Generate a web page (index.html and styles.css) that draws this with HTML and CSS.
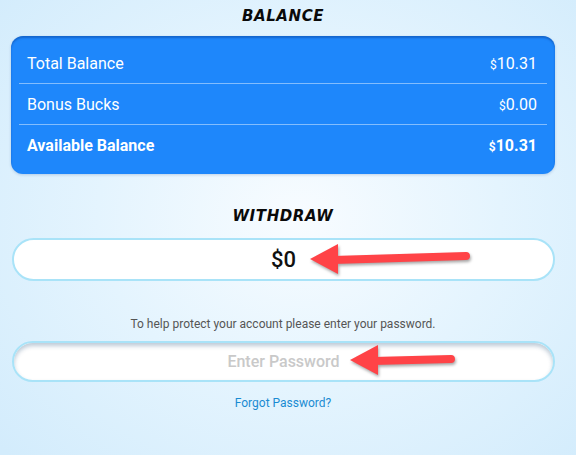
FILE: index.html
```html
<!DOCTYPE html>
<html>
<head>
<meta charset="utf-8">
<link rel="stylesheet" href="styles.css">
</head>
<body>
<main class="page">
  <h2 class="title">BALANCE</h2>
  <section class="card">
    <div class="row"><span>Total Balance</span><span class="amt"><small>$</small>10.31</span></div>
    <div class="row"><span>Bonus Bucks</span><span class="amt"><small>$</small>0.00</span></div>
    <div class="row bold"><span>Available Balance</span><span class="amt"><small>$</small>10.31</span></div>
  </section>

  <h2 class="title title-w">WITHDRAW</h2>
  <div class="field">
    <div class="input amount">$0</div>
    <svg class="arrow" width="544" height="42" viewBox="0 0 544 42">
      <line x1="322" y1="22" x2="455" y2="18" stroke="#ff4347" stroke-width="8" stroke-linecap="round"/>
      <polygon points="299,21 327,6 327,36" fill="#ff4347"/>
    </svg>
  </div>

  <p class="help">To help protect your account please enter your password.</p>
  <div class="field">
    <div class="input password">Enter Password</div>
    <svg class="arrow" width="544" height="40" viewBox="0 0 544 40">
      <line x1="362" y1="20" x2="440" y2="18" stroke="#ff4347" stroke-width="8" stroke-linecap="round"/>
      <polygon points="339,19 367,4 367,34" fill="#ff4347"/>
    </svg>
  </div>
  <a class="forgot" href="#">Forgot Password?</a>
</main>
</body>
</html>
```
FILE: styles.css
```css
html, body {
  margin: 0;
  padding: 0;
  height: 100%;
}
body {
  background: radial-gradient(ellipse 70% 75% at 52% 48%, #f8fcff 0%, #e4f4fe 50%, #d3ecfc 100%);
  font-family: Roboto, "Liberation Sans", sans-serif;
  overflow: hidden;
}
.page {
  width: 544px;
  margin-left: 11px;
  display: flex;
  flex-direction: column;
}
.title {
  margin: 0;
  height: 36px;
  line-height: 32px;
  text-align: center;
  font-family: "DejaVu Sans", sans-serif;
  font-weight: bold;
  font-style: italic;
  font-size: 15px;
  letter-spacing: 0.6px;
  color: #0a0a0a;
}
.title-w {
  margin-top: 26px;
  height: 38px;
  line-height: 33px;
}
.card {
  background: #1e87fb;
  border-radius: 12px;
  padding: 7px 8px 8px;
  height: 123px;
  box-shadow: inset 0 2px 2px rgba(0, 40, 120, 0.35), 0 1px 3px rgba(0, 60, 140, 0.2);
  display: flex;
  flex-direction: column;
}
.row {
  height: 41px;
  display: flex;
  align-items: center;
  justify-content: space-between;
  padding: 0 10px 0 8px;
  color: #fff;
  font-size: 16px;
  border-bottom: 1px solid rgba(255, 255, 255, 0.45);
  box-sizing: border-box;
}
.row:last-child {
  border-bottom: none;
}
.row.bold {
  font-weight: bold;
}
.amt small {
  font-size: 12px;
}
.field {
  position: relative;
}
.input {
  box-sizing: border-box;
  width: 543px;
  margin-left: 1px;
  border: 2px solid #a9e3f8;
  border-radius: 22px;
  background: #fff;
  text-align: center;
}
.amount {
  height: 43px;
  line-height: 39px;
  font-size: 22px;
  font-weight: 500;
  color: #111;
}
.password {
  height: 41px;
  line-height: 37px;
  font-size: 16px;
  font-weight: 500;
  color: #c9c9c9;
  box-shadow: inset 0 3px 4px rgba(40, 80, 120, 0.3);
}
.arrow {
  position: absolute;
  left: 0;
  top: 0;
  filter: drop-shadow(1px 2px 1.5px rgba(0, 0, 0, 0.35));
}
.help {
  margin: 0;
  height: 60px;
  padding-bottom: 10px;
  box-sizing: border-box;
  display: flex;
  align-items: flex-end;
  justify-content: center;
  text-align: center;
  font-size: 12px;
  line-height: 14px;
  color: #555;
}
.forgot {
  margin-top: 14px;
  text-align: center;
  font-size: 12px;
  color: #1a8bd2;
  text-decoration: none;
}
```
